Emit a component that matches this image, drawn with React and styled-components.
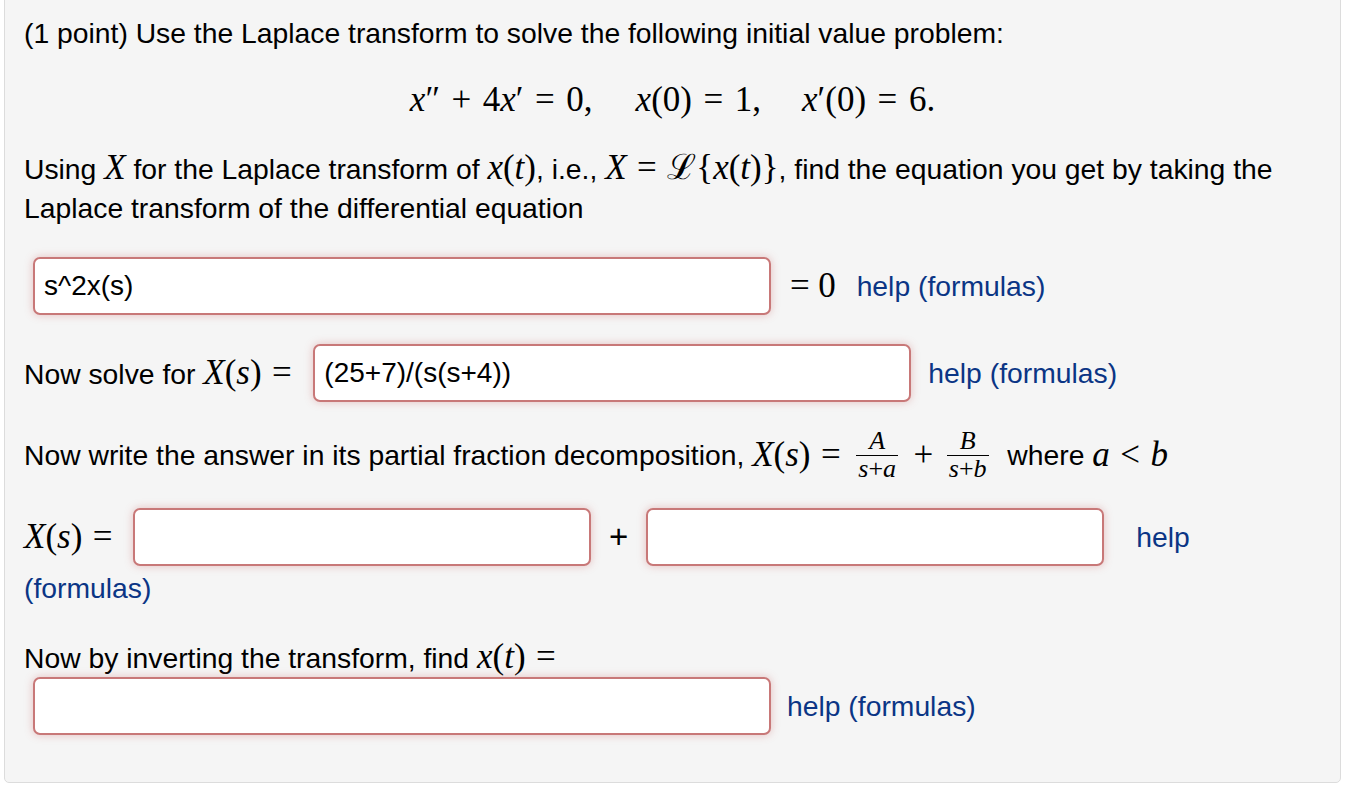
import React from "react";
import styled, { createGlobalStyle } from "styled-components";

const Global = createGlobalStyle`
  html, body {
    margin: 0;
    padding: 0;
    background: #fff;
    overflow: hidden;
  }
  body {
    font-family: "Liberation Sans", Arial, Helvetica, sans-serif;
    color: #000;
  }
`;

const Panel = styled.div`
  margin: -4px 0 0 4px;
  width: 1337px;
  box-sizing: border-box;
  background: #f5f5f5;
  border: 1px solid #dcdcdc;
  border-radius: 0 0 5px 5px;
  padding: 16px 19px 47px 19px;
  font-size: 28.3px;
`;

const Line = styled.div`
  line-height: 40px;
  height: 40px;
  margin-top: ${p => p.mt || 0}px;
  white-space: nowrap;
`;

const Display = styled.div`
  margin-top: ${p => p.mt || 0}px;
  height: 40px;
  line-height: 40px;
  text-align: center;
  font-family: "Liberation Serif", "Times New Roman", serif;
  font-size: 35px;
  white-space: nowrap;
`;

const Row = styled.div`
  display: flex;
  align-items: center;
  margin-top: ${p => p.mt || 0}px;
  height: ${p => p.h || 58}px;
  white-space: nowrap;
`;

const Math = styled.span`
  font-family: "Liberation Serif", "Times New Roman", serif;
  font-size: 35px;
`;

const V = styled.i`
  font-style: italic;
`;

const Op = styled.span`
  margin: 0 ${p => p.s || 0.3}em;
`;

const Quad = styled.span`
  display: inline-block;
  width: ${p => p.w || 40}px;
`;

const Answer = styled.div`
  box-sizing: border-box;
  width: ${p => p.w}px;
  height: 58px;
  margin-left: ${p => p.ml || 0}px;
  margin-right: ${p => p.mr || 0}px;
  background: #fff;
  border: 2px solid #c87878;
  border-radius: 7px;
  box-shadow: 0 0 9px rgba(200, 90, 90, 0.35);
  padding: 0 9px;
  display: flex;
  align-items: center;
  font-size: 28px;
`;

const Help = styled.a`
  color: #0b3585;
  text-decoration: none;
  margin-left: ${p => p.ml || 0}px;
`;

const Plus = styled.span`
  font-size: 33px;
  margin: 0 2px;
`;

const Frac = styled.span`
  display: inline-flex;
  flex-direction: column;
  align-items: center;
  font-family: "Liberation Serif", "Times New Roman", serif;
  font-style: italic;
  font-size: 26px;
  line-height: 24px;
  margin: 0 ${p => p.mx || 4}px;
`;

const Num = styled.span`
  padding: 0 4px 2px;
  border-bottom: 1.5px solid #000;
  align-self: stretch;
  text-align: center;
`;

const Den = styled.span`
  padding: 1px 2px 0;
`;

const Up = styled.span`
  font-style: normal;
`;

export default function App() {
  return (
    <>
      <Global />
      <Panel>
        <Line>(1 point) Use the Laplace transform to solve the following initial value problem:</Line>
        <Display mt={27}>
          <V>x</V>″<Op s={0.33}>+</Op>4<V>x</V>′<Op s={0.33}>=</Op>0,<Quad w={43} />
          <V>x</V>(0)<Op s={0.33}>=</Op>1,<Quad w={41} />
          <V>x</V>′(0)<Op s={0.33}>=</Op>6.
        </Display>
        <Line mt={28}>
          Using <Math><V>X</V></Math> for the Laplace transform of <Math><V>x</V>(<V>t</V>)</Math>, i.e.,{" "}
          <Math><V>X</V><Op>=</Op>ℒ{"{"}<V>x</V>(<V>t</V>){"}"}</Math>, find the equation you get by taking the
        </Line>
        <Line>Laplace transform of the differential equation</Line>

        <Row mt={29}>
          <Answer w={738} ml={9} mr={19}>s^2x(s)</Answer>
          <Math>=<Op s={0.12} />0</Math>
          <Help ml={21}>help (formulas)</Help>
        </Row>

        <Row mt={29}>
          <span>
            Now solve for <Math><V>X</V>(<V>s</V>)<Op>=</Op></Math>
          </span>
          <Answer w={598} ml={11}>(25+7)/(s(s+4))</Answer>
          <Help ml={17}>help (formulas)</Help>
        </Row>

        <Row mt={33} h={40}>
          <span>Now write the answer in its partial fraction decomposition,&nbsp;</span>
          <Math><V>X</V>(<V>s</V>)<Op>=</Op></Math>
          <Frac mx={5}>
            <Num>A</Num>
            <Den>s<Up>+</Up>a</Den>
          </Frac>
          <Math><Op s={0.3}>+</Op></Math>
          <Frac mx={3}>
            <Num>B</Num>
            <Den>s<Up>+</Up>b</Den>
          </Frac>
          <span>&nbsp;&nbsp;where&nbsp;</span>
          <Math><V>a</V><Op>&lt;</Op><V>b</V></Math>
        </Row>

        <Row mt={33}>
          <Math><V>X</V>(<V>s</V>)<Op>=</Op></Math>
          <Answer w={458} ml={10} mr={16} />
          <Plus>+</Plus>
          <Answer w={458} ml={16} />
          <Help ml={32}>help</Help>
        </Row>
        <Line mt={2}>
          <Help>(formulas)</Help>
        </Line>

        <Line mt={29}>
          Now by inverting the transform, find <Math><V>x</V>(<V>t</V>)<Op>=</Op></Math>
        </Line>
        <Row>
          <Answer w={738} ml={9} />
          <Help ml={16}>help (formulas)</Help>
        </Row>
      </Panel>
    </>
  );
}
